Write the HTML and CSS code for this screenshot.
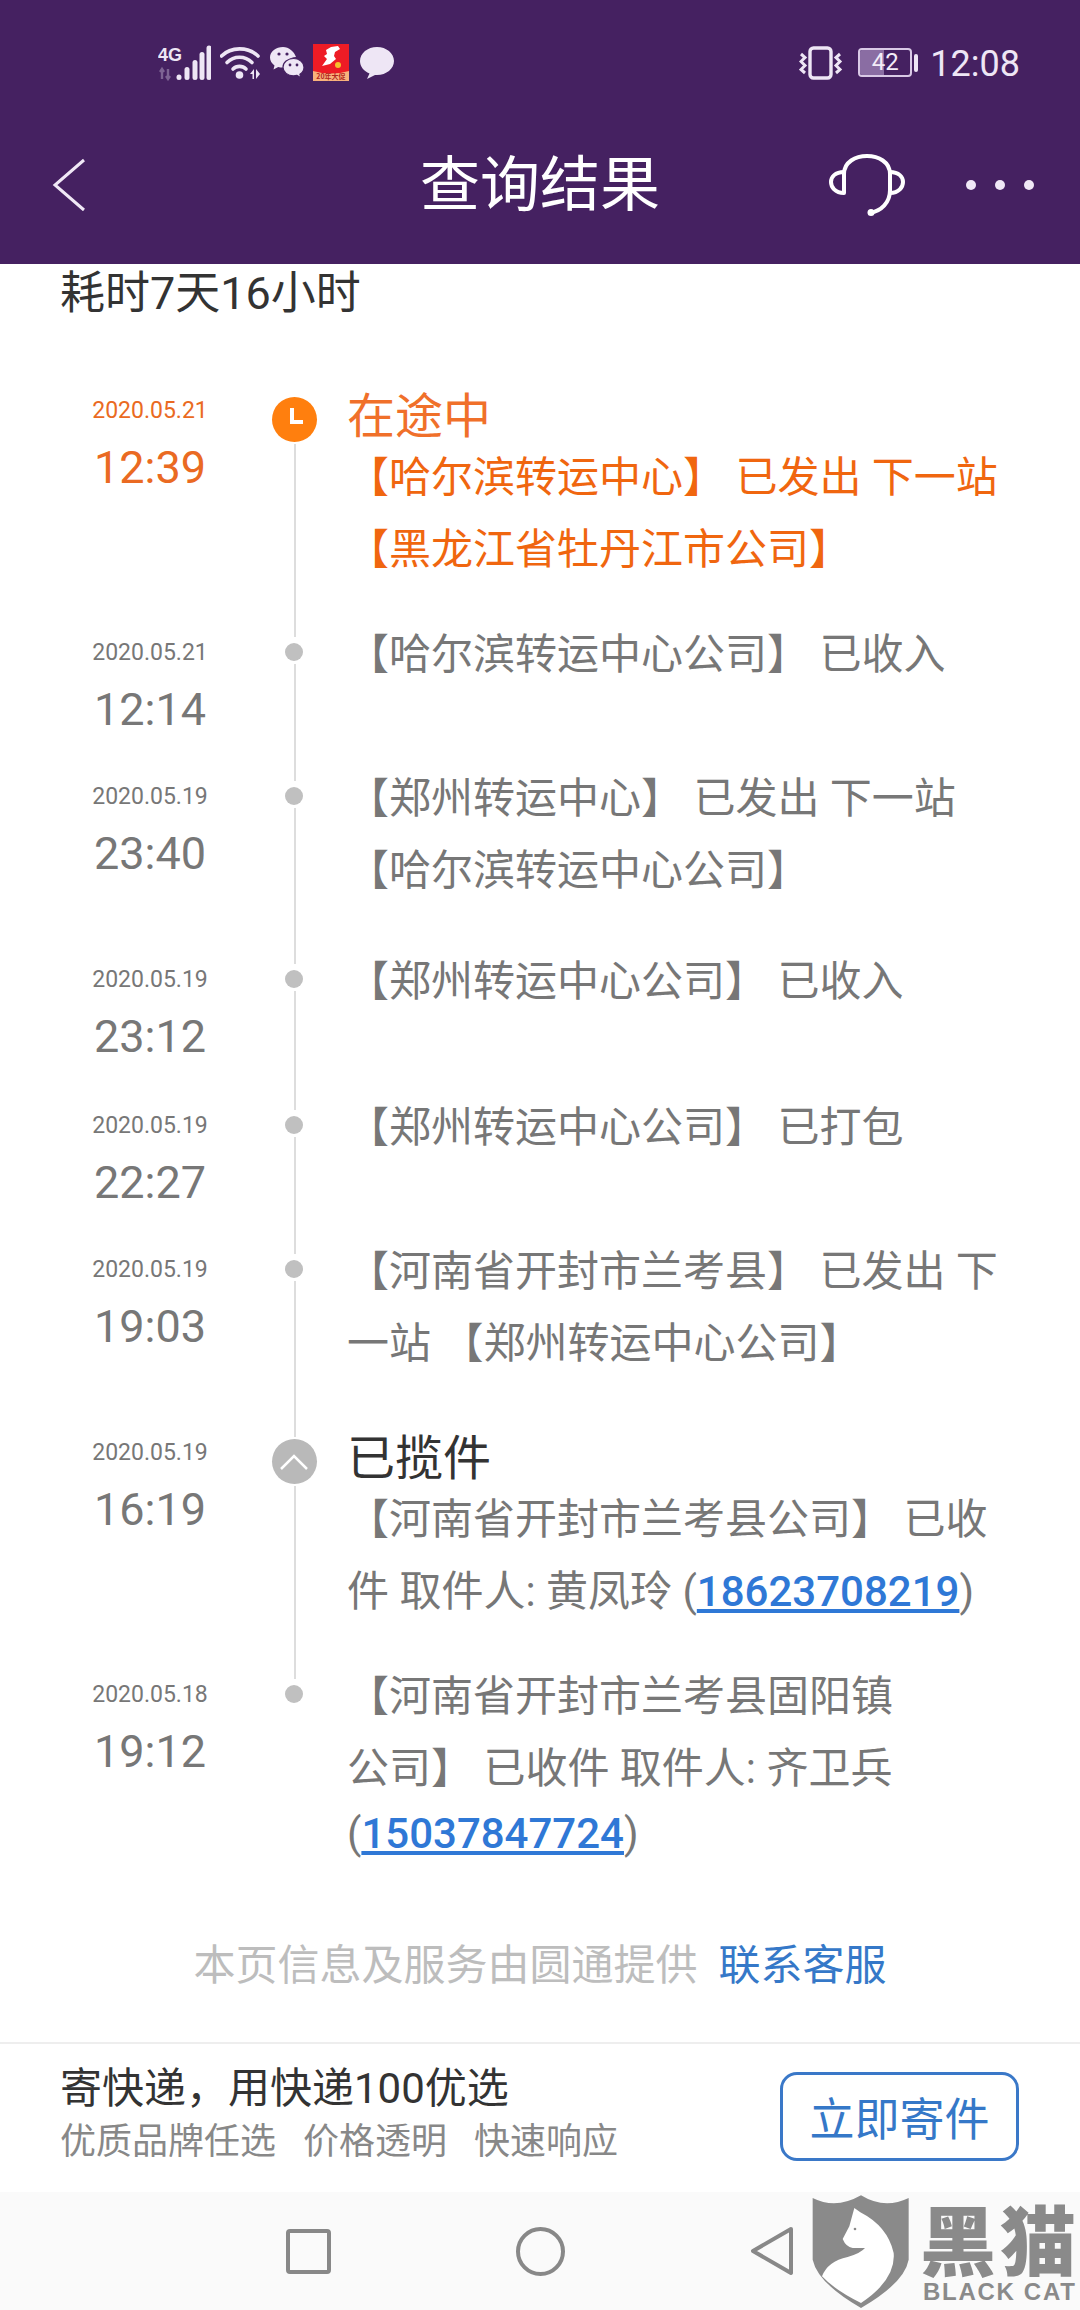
FILE: index.html
```html
<!DOCTYPE html>
<html lang="zh-CN">
<head>
  <meta charset="UTF-8" />
  <title>查询结果</title>
  <link rel="stylesheet" href="styles.css">
</head>
<body>
  <header>
    <div class="status-bar">
      <div class="status-left">
        <svg class="ic-signal" width="53" height="36" viewBox="0 0 53 36">
          <text x="0" y="16" class="txt-4g">4G</text>
          <path d="M4 34V24M2 27l2-3 2 3M10 24v10M8 31l2 3 2-3" fill="none" stroke="#7d6393" stroke-width="2.4"/>
          <g fill="none" stroke="#eee6f5" stroke-width="5" stroke-linecap="round">
            <path d="M21 32.5v-.5"/><path d="M29 32.5v-8"/><path d="M37 32.5v-15"/><path d="M44 32.5v-23"/><path d="M51 32.5V3"/>
          </g>
        </svg>
        <svg class="ic-wifi" width="40" height="36" viewBox="0 0 40 36">
          <g fill="none" stroke="#eee6f5" stroke-width="3.6" stroke-linecap="round">
            <path d="M1.5 11C11 1.500 28 1.500 38 11"/>
            <path d="M7 17.500C14 10.500 25 10.500 32 17.500"/>
            <path d="M13 24C16.500 20.500 22.500 20.500 26 24"/>
          </g>
          <circle cx="19.500" cy="30" r="3.800" fill="#eee6f5"/>
          <path d="M30 29l4-5v10h-1.500v-5zM36 24l4 5-4 5z" fill="#eee6f5"/>
        </svg>
        <svg class="ic-wechat" width="34" height="34" viewBox="0 0 34 34">
          <path d="M13 1C6 1 0 5.500 0 11.500c0 3.300 1.800 6 4.500 8l-1 4 4.700-2.600c1.500.5 3 .7 4.800.7 1 0 1.500 0 2-.1-.4-5.500 4-10 11-10.500C24 5.500 19 1 13 1z" fill="#eee6f5"/>
          <path d="M23.500 12.500c-5.800 0-10.500 3.900-10.500 8.700s4.700 8.700 10.500 8.700c1.200 0 2.400-.2 3.500-.5l3.800 2.300-.9-3.500c2.500-1.600 4.100-4 4.100-7 0-4.800-4.700-8.700-10.500-8.700z" fill="#eee6f5" stroke="#452161" stroke-width="1.200"/>
          <circle cx="9" cy="8" r="1.600" fill="#452161"/><circle cx="17" cy="8" r="1.600" fill="#452161"/>
          <circle cx="20" cy="19" r="1.400" fill="#452161"/><circle cx="27" cy="19" r="1.400" fill="#452161"/>
        </svg>
        <svg class="ic-app" width="36" height="37" viewBox="0 0 36 37">
          <rect width="36" height="37" fill="#ee1c25"/>
          <path d="M0 27q18 5 36 0v10H0z" fill="#f8b27c"/>
          <path d="M13 6l5-3 7-1 2 3-5 3-1 4 2 3-6 5-8 2 5-7-3-3 3-2z" fill="#fff"/>
          <circle cx="25" cy="21" r="3" fill="#f6c02c"/>
          <text x="18" y="35" class="txt-app">20年大促</text>
        </svg>
        <svg class="ic-bubble" width="34" height="34" viewBox="0 0 34 34">
          <path d="M17 1C7.600 1 0 7.300 0 15c0 5.500 3.800 10.200 9.500 12.500L7 33l8-4.100c.7.100 1.300.100 2 .100 9.400 0 17-6.300 17-14S26.400 1 17 1z" fill="#eee6f5"/>
        </svg>
      </div>
      <div class="status-right">
        <svg class="ic-vibrate" width="44" height="34" viewBox="0 0 44 34">
          <rect x="11" y="2" width="21" height="30" rx="3.500" fill="none" stroke="#eee6f5" stroke-width="3.400"/>
          <g fill="none" stroke="#eee6f5" stroke-width="3">
            <path d="M2 8l4 3.500-4 4 4 4-4 4 4 3.500"/>
            <path d="M41 8l-4 3.500 4 4-4 4 4 4-4 3.500"/>
          </g>
        </svg>
        <div class="battery">
          <div class="battery-body"><span class="battery-fill" style="width: 47%"></span><span class="battery-num">42</span></div>
          <span class="battery-nub"></span>
        </div>
        <span class="clock">12:08</span>
      </div>
    </div>
    <div class="nav-row">
      <div class="nav-left">
        <svg width="34" height="54" viewBox="0 0 34 54"><path d="M32 2L3 27l29 25" fill="none" stroke="#f0e8f6" stroke-width="3"/></svg>
      </div>
      <h1>查询结果</h1>
      <div class="nav-right">
        <svg width="76" height="62" viewBox="0 0 76 62">
          <g fill="none" stroke="#fff" stroke-width="4" stroke-linecap="round">
            <path d="M15 20C15 -4 61 -4 61 20V36C61 49 52 57 41 59"/>
            <path d="M15 18C6 18 2 23 2 28s4 11 13 11z" stroke-linejoin="round"/>
            <path d="M61 18C70 18 74 23 74 28s-4 11-13 11z" stroke-linejoin="round"/>
          </g>
          <circle cx="42" cy="58.500" r="3.500" fill="#fff"/>
        </svg>
        <div class="more"><i></i><i></i><i></i></div>
      </div>
    </div>
  </header>

  <main>
    <p class="elapsed">耗时7天16小时</p>

    <div class="timeline">
      <div class="row row-title now">
        <div class="when"><div class="date">2020.05.21</div><div class="time">12:39</div></div>
        <div class="rail"><span class="node node-clock">
          <svg width="24" height="24" viewBox="0 0 24 24"><path d="M10 0v14h11" fill="none" stroke="#fff" stroke-width="4"/></svg>
        </span><span class="line"></span></div>
        <div class="text">
          <h3>在途中</h3>
          <p>【哈尔滨转运中心】 已发出 下一站<br>【黑龙江省牡丹江市公司】</p>
        </div>
      </div>

      <div class="row">
        <div class="when"><div class="date">2020.05.21</div><div class="time">12:14</div></div>
        <div class="rail"><span class="dot"></span><span class="line"></span></div>
        <div class="text"><p>【哈尔滨转运中心公司】 已收入</p></div>
      </div>

      <div class="row">
        <div class="when"><div class="date">2020.05.19</div><div class="time">23:40</div></div>
        <div class="rail"><span class="dot"></span><span class="line"></span></div>
        <div class="text"><p>【郑州转运中心】 已发出 下一站<br>【哈尔滨转运中心公司】</p></div>
      </div>

      <div class="row row-tall">
        <div class="when"><div class="date">2020.05.19</div><div class="time">23:12</div></div>
        <div class="rail"><span class="dot"></span><span class="line"></span></div>
        <div class="text"><p>【郑州转运中心公司】 已收入</p></div>
      </div>

      <div class="row">
        <div class="when"><div class="date">2020.05.19</div><div class="time">22:27</div></div>
        <div class="rail"><span class="dot"></span><span class="line"></span></div>
        <div class="text"><p>【郑州转运中心公司】 已打包</p></div>
      </div>

      <div class="row">
        <div class="when"><div class="date">2020.05.19</div><div class="time">19:03</div></div>
        <div class="rail"><span class="dot"></span><span class="line"></span></div>
        <div class="text"><p>【河南省开封市兰考县】 已发出 下<br>一站 【郑州转运中心公司】</p></div>
      </div>

      <div class="row row-title">
        <div class="when"><div class="date">2020.05.19</div><div class="time">16:19</div></div>
        <div class="rail"><span class="node node-up">
          <svg width="30" height="18" viewBox="0 0 30 18"><path d="M2 16L15 3l13 13" fill="none" stroke="#fff" stroke-width="2.500"/></svg>
        </span><span class="line"></span></div>
        <div class="text">
          <h3>已揽件</h3>
          <p>【河南省开封市兰考县公司】 已收<br>件 取件人: 黄凤玲 (<a class="phone">18623708219</a>)</p>
        </div>
      </div>

      <div class="row row-last">
        <div class="when"><div class="date">2020.05.18</div><div class="time">19:12</div></div>
        <div class="rail"><span class="dot"></span></div>
        <div class="text"><p>【河南省开封市兰考县固阳镇<br>公司】 已收件 取件人: 齐卫兵<span class="short-line">(<a class="phone">15037847724</a>)</span></p></div>
      </div>
    </div>

    <p class="provider">本页信息及服务由圆通提供<a class="contact">联系客服</a></p>
  </main>

  <section class="promo">
    <div class="promo-text">
      <div class="promo-title">寄快递，用快递100优选</div>
      <div class="promo-sub"><span>优质品牌任选</span><span>价格透明</span><span>快速响应</span></div>
    </div>
    <button class="send-btn">立即寄件</button>
  </section>

  <footer class="sys-nav">
    <span class="nav-square"></span>
    <span class="nav-circle"></span>
    <svg width="44" height="50" viewBox="0 0 44 50"><path d="M41 3L3 25l38 22z" fill="none" stroke="#888" stroke-width="4" stroke-linejoin="round"/></svg>
  </footer>

  <div class="watermark">
    <svg width="100" height="115" viewBox="270 73 300 345">
      <path d="M275 85Q345 120 420 77Q490 120 563 85L563 270Q550 340 420 415Q290 340 275 270Z" fill="#8a8a8a"/>
      <path d="M400 115L418 128Q500 170 518 250Q525 330 420 400Q340 360 303 320Q320 275 380 262Q420 250 432 235L395 235Q375 232 365 208L385 170Z" fill="#fff"/>
      <circle cx="402" cy="178" r="4" fill="#8a8a8a"/>
    </svg>
    <div class="wm-text">
      <div class="wm-cn">黑猫</div>
      <div class="wm-en">BLACK CAT</div>
    </div>
  </div>
</body>
</html>
```

FILE: styles.css
```css
* {
  box-sizing: border-box;
}

html, body {
  margin: 0;
  padding: 0;
}

body {
  position: relative;
  width: 1080px;
  height: 2310px;
  overflow: hidden;
  display: flex;
  flex-direction: column;
  background: #fff;
  font-family: Roboto, "Noto Sans CJK SC", sans-serif;
}

/* header */
header {
  height: 264px;
  flex-shrink: 0;
  background-color: #452161;
  color: #fff;
}

.status-bar {
  height: 80px;
  padding: 45px 60px 0 158px;
  display: flex;
  justify-content: space-between;
  align-items: center;
}

.status-left, .status-right {
  display: flex;
  align-items: center;
}

.ic-wifi { margin-left: 9px; }
.ic-wechat { margin-left: 10px; }
.ic-app { margin-left: 9px; }
.ic-bubble { margin-left: 11px; }

.txt-4g {
  font-family: "Liberation Sans Narrow", "Liberation Sans", sans-serif;
  font-size: 18px;
  font-weight: 700;
  fill: #eee6f5;
}

.txt-app {
  font-family: "Noto Sans CJK SC", sans-serif;
  font-size: 7px;
  font-weight: 700;
  fill: #b3261e;
  text-anchor: middle;
}

.battery {
  display: flex;
  align-items: center;
  margin-left: 15px;
}

.battery-body {
  position: relative;
  width: 54px;
  height: 29px;
  border: 2px solid #d9c9e6;
  border-radius: 4px;
  overflow: hidden;
}

.battery-fill {
  display: block;
  height: 100%;
  background: #8a6da3;
}

.battery-num {
  position: absolute;
  left: 0;
  right: 0;
  top: 0;
  text-align: center;
  font-size: 24px;
  line-height: 25px;
  color: #f3ecf8;
}

.battery-nub {
  width: 4px;
  height: 18px;
  margin-left: 2px;
  border-radius: 2px;
  background: #eee6f5;
}

.clock {
  margin-left: 12px;
  padding-top: 3px;
  font-size: 36px;
  color: #eee6f5;
}

.nav-row {
  height: 80px;
  margin-top: 64px;
  padding: 0 46px;
  display: grid;
  grid-template-columns: 1fr auto 1fr;
  align-items: center;
}

.nav-left {
  display: flex;
  align-items: center;
  padding-left: 6px;
}

h1 {
  margin: 0;
  padding-top: 2px;
  font-size: 60px;
  font-weight: 400;
  line-height: 80px;
}

.nav-right {
  display: flex;
  justify-content: flex-end;
  align-items: center;
  gap: 61px;
}

.more {
  display: flex;
  gap: 19px;
}

.more i {
  width: 10px;
  height: 10px;
  border-radius: 50%;
  background: #f0e8f6;
}

/* main */
main {
  flex-grow: 1;
}

.elapsed {
  margin: 0;
  padding: 4px 0 0 60px;
  font-size: 45px;
  line-height: 52px;
  color: #333;
}

.timeline {
  margin-top: 76px;
  padding-left: 60px;
}

.row {
  display: grid;
  grid-template-columns: 180px 46px 1fr;
  column-gap: 31px;
  min-height: 144px;
  color: #777;
}

.row-tall {
  min-height: 146px;
}

.when {
  text-align: center;
}

.date {
  font-size: 23px;
  line-height: 30px;
}

.time {
  margin-top: 16px;
  font-size: 45px;
  line-height: 52px;
}

.rail {
  display: flex;
  flex-direction: column;
  align-items: center;
}

.dot {
  width: 18px;
  height: 18px;
  margin-top: 5px;
  margin-bottom: 3px;
  border-radius: 50%;
  background: #c0c0c0;
}

.node {
  width: 45px;
  height: 45px;
  margin-top: 1px;
  margin-bottom: 2px;
  border-radius: 50%;
  display: flex;
  justify-content: center;
  align-items: center;
}

.node-clock {
  background: #ff7f0e;
}

.node-up {
  background: #b9b9b9;
}

.line {
  flex-grow: 1;
  width: 2px;
  margin-left: 2px;
  margin-bottom: 1px;
  background: #ddd;
}

.text {
  margin: -19px 0 0 -1px;
  padding-bottom: 58px;
}

.text p {
  margin: 0;
  font-size: 42px;
  line-height: 72px;
  white-space: nowrap;
}

.text h3 {
  margin: 0;
  font-size: 48px;
  font-weight: 400;
  line-height: 51px;
  color: #333;
}

.row-title .text {
  margin-top: -5px;
  padding-bottom: 52px;
}

.short-line {
  display: block;
  margin-top: -7px;
}

.now {
  color: #f0660f;
}

.now .date,
.now .time {
  color: #ea6a22;
}

.now .text h3 {
  color: #f0702a;
}

.phone {
  font-weight: 500;
  color: #2f78d6;
  text-decoration: underline;
}

.provider {
  margin: 2px 0 0;
  text-align: center;
  font-size: 42px;
  line-height: 72px;
  color: #bdbdbd;
}

.contact {
  margin-left: 21px;
  color: #3578c8;
}

/* bottom bar */
.promo {
  height: 150px;
  flex-shrink: 0;
  padding: 0 61px 3px 60px;
  border-top: 2px solid #eee;
  display: flex;
  justify-content: space-between;
  align-items: center;
}

.promo-text {
  margin-bottom: 6px;
}

.promo-title {
  font-size: 42px;
  line-height: 52px;
  color: #333;
}

.promo-sub {
  display: flex;
  gap: 27px;
  margin-top: 4px;
  font-size: 36px;
  line-height: 46px;
  color: #888;
}

.send-btn {
  width: 239px;
  height: 89px;
  border: 3px solid #3a78c8;
  border-radius: 17px;
  background: #fff;
  color: #3578c8;
  font-family: inherit;
  font-size: 45px;
  padding: 0;
}

.sys-nav {
  height: 118px;
  flex-shrink: 0;
  padding-left: 286px;
  background: #fafafa;
  display: flex;
  align-items: center;
  gap: 185px;
}

.nav-square {
  width: 45px;
  height: 45px;
  border: 4px solid #888;
  border-radius: 4px;
}

.nav-circle {
  width: 49px;
  height: 49px;
  border: 4px solid #888;
  border-radius: 50%;
}

/* watermark sits over the nav bar */
.watermark {
  position: absolute;
  left: 811px;
  top: 2194px;
  display: flex;
  gap: 9px;
  color: #8a8a8a;
}

.wm-cn {
  margin-top: 1px;
  font-family: "Noto Sans CJK SC", sans-serif;
  font-size: 76px;
  font-weight: 900;
  line-height: 84px;
  letter-spacing: 4px;
  white-space: nowrap;
}

.wm-en {
  margin-left: 3px;
  font-family: "Liberation Sans", sans-serif;
  font-size: 24px;
  font-weight: 700;
  line-height: 26px;
  letter-spacing: 1.700px;
  white-space: nowrap;
}
```
